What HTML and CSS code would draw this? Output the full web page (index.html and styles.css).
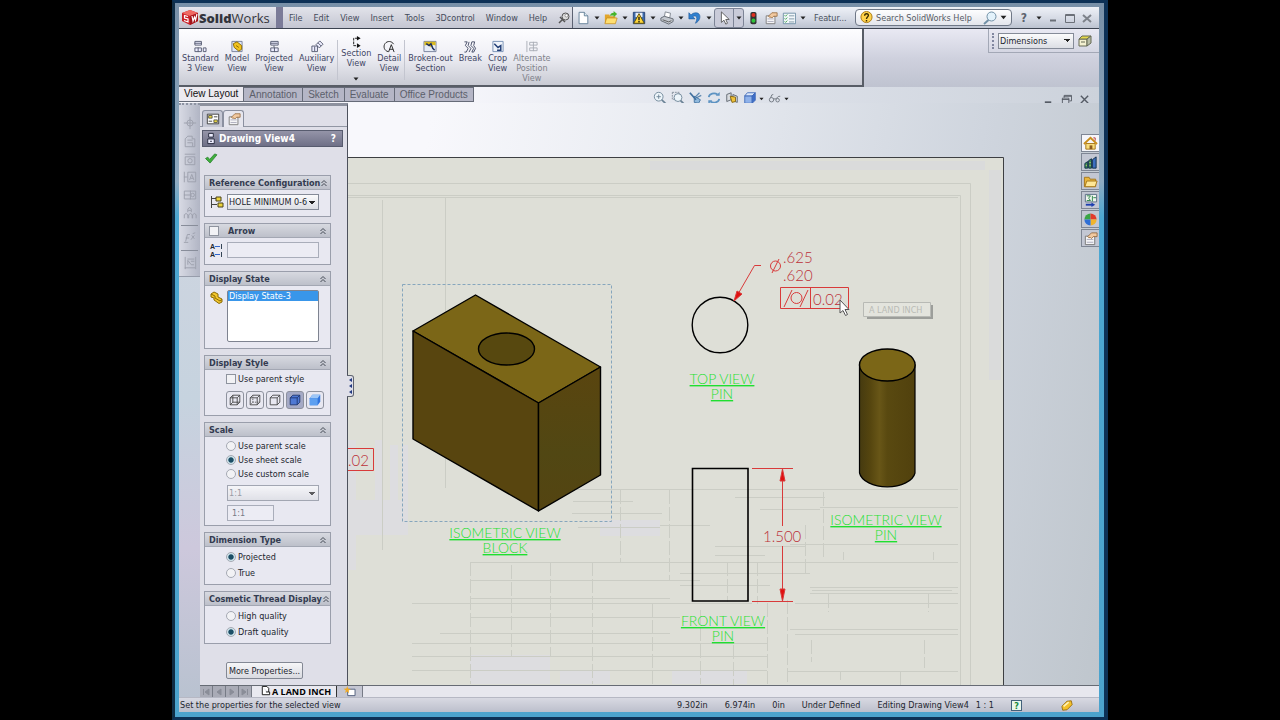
FILE: index.html
```html
<!DOCTYPE html>
<html lang="en">
<head>
  <meta charset="UTF-8">
  <title>SolidWorks - A LAND INCH</title>
  <link rel="stylesheet" href="styles.css">
</head>
<body>
<svg class="sprite" aria-hidden="true">
  <symbol id="up" viewBox="0 0 8 8"><path d="M1.5 4L4 1.5 6.5 4M1.5 7L4 4.500 6.500 7" fill="none" stroke="#444a55"/></symbol>
  <symbol id="down" viewBox="0 0 6 4"><path d="M0.500 0.500h5L3 3.500z" fill="#222"/></symbol>
  <symbol id="hand" viewBox="0 0 16 16"><path d="M2.500 5.500h10v9h-10z" fill="#f4f4f6" stroke="#777"/><path d="M4 9h7M4 12h7" stroke="#aab"/><path d="M5 6l4-4 6 0v4l-4 0-2 2-1-1-2 0z" fill="#f1c9a0" stroke="#8a5a2a" stroke-width=".8"/></symbol>
  <symbol id="cube" viewBox="0 0 16 16"><path d="M2 5.500h8.500v8.500H2z" fill="#8fb2ea" stroke="#3d68b8"/><path d="M2 5.500L5 2h9l-3.500 3.500z" fill="#dbe8fb" stroke="#3d68b8"/><path d="M14 2v8.500L10.500 14V5.500z" fill="#3f6fc9" stroke="#3d68b8"/></symbol>
</svg>

<main class="window">
  <header class="titlebar">
    <div class="brand">
      <svg width="18" height="17" viewBox="0 0 18 17"><path d="M1 4l8-3 8 3v8l-8 4-8-4z" fill="#c91f26"/><path d="M1 4l8-3 8 3-8 3z" fill="#ef6a63"/><path d="M9 7v9l8-4V4z" fill="#a5141b"/><path d="M7 7.500L3.500 6.500v2.500L7 10v3l-4-1.500M11 7l1 5 1.500-4 1 3L16 5" fill="none" stroke="#fff" stroke-width="1.200"/></svg>
      <strong>Solid</strong><span>Works</span>
    </div>
    <nav class="menu">
      <a href="#">File</a><a href="#">Edit</a><a href="#">View</a><a href="#">Insert</a><a href="#">Tools</a><a href="#">3Dcontrol</a><a href="#">Window</a><a href="#">Help</a>
      <svg width="12" height="12" viewBox="0 0 12 12"><circle cx="7.500" cy="4.500" r="3.500" fill="#ddd" stroke="#555"/><circle cx="8.500" cy="3.500" r="1.500" fill="#fff" stroke="#666" stroke-width=".6"/><path d="M1 11l4-4M2 5l5 5" stroke="#555" stroke-width="1.500"/></svg>
    </nav>
    <div class="quick">
      <button title="New"><svg viewBox="0 0 16 16"><path d="M3.500 1.500h6l4 4v9h-10z" fill="#fff" stroke="#5d7a92"/><path d="M9.500 1.500v4h4" fill="#dceaf2" stroke="#5d7a92"/></svg></button>
      <button class="drop" title="New options"><svg><use href="#down"/></svg></button>
      <button title="Open"><svg viewBox="0 0 16 16"><path d="M1 4h5l1 2h6v8H1z" fill="#e2a62b"/><path d="M3 8h12l-2 6.500H1z" fill="#ffdf70" stroke="#c18a20" stroke-width=".8"/><path d="M7 6c0-3 2-4 4-4V0l4 3.500L11 7V5C9 5 8 5 7 6z" fill="#47b52c"/></svg></button>
      <button class="drop" title="Open options"><svg><use href="#down"/></svg></button>
      <button title="Save"><svg viewBox="0 0 16 16"><path d="M1.500 1.500h13v13h-13z" fill="#3c6cae" stroke="#243f70"/><path d="M4 2h8v5H4z" fill="#e9eef6"/><path d="M8 3l6 11H2z" fill="#ffd83c" stroke="#5b4b00"/><path d="M8 6.500v4M8 11.500v1.500" stroke="#111" stroke-width="1.500"/></svg></button>
      <button class="drop" title="Save options"><svg><use href="#down"/></svg></button>
      <button title="Print"><svg viewBox="0 0 16 16"><path d="M5 7l1-6 6 1.500-1 6z" fill="#fff" stroke="#7a828c"/><path d="M1 8l4-2 10 3v3l-5 3-9-4z" fill="#c3c8cf" stroke="#5b626c"/><path d="M3 10l7 2.500 3-1.500" fill="none" stroke="#555"/></svg></button>
      <button class="drop" title="Print options"><svg><use href="#down"/></svg></button>
      <button title="Undo"><svg viewBox="0 0 16 16"><path d="M1 2v7h7L5.500 6.500C9 4 12 7 8.500 14 15 11 15.500 2 9 2 6.500 2 5 3 3.500 4.500z" fill="#2f80d0" stroke="#1a5698" stroke-width=".7"/></svg></button>
      <button class="drop" title="Undo options"><svg><use href="#down"/></svg></button>
      <span class="select">
        <button title="Select"><svg viewBox="0 0 16 16"><path d="M5 1v12l3-2.500 2 4.500 2-1-2-4.300h4z" fill="#fff" stroke="#555"/></svg></button>
        <button class="drop" title="Select options"><svg><use href="#down"/></svg></button>
      </span>
      <button title="Rebuild"><svg viewBox="0 0 16 16"><rect x="5" y="1" width="7" height="14" rx="2" fill="#333"/><circle cx="8.500" cy="4.500" r="2.300" fill="#e0301f"/><circle cx="8.500" cy="11" r="2.300" fill="#2fc33a"/></svg></button>
      <button title="Properties"><svg><use href="#hand"/></svg></button>
      <button title="Options"><svg viewBox="0 0 16 16"><path d="M1.500 2.500h14v12h-14z" fill="#f2f7fa" stroke="#6a8ba2"/><path d="M3 5l1 1 2-2M3 8.500l1 1 2-2M3 12l1 1 2-2" fill="none" stroke="#2c9b39"/><path d="M8 5.500h6M8 9h6M8 12.500h6" stroke="#7891a2"/></svg></button>
      <button class="drop" title="More"><svg><use href="#down"/></svg></button>
    </div>
    <span class="doc">Featur...</span>
    <form class="search">
      <svg width="13" height="13" viewBox="0 0 14 14"><circle cx="7" cy="6.500" r="6" fill="#ffd24a" stroke="#a87812"/><path d="M5 5c0-3 4.500-2.500 4 0C8.700 6.500 7 6.500 7 8.500M7 9.700v1.600" fill="none" stroke="#3a2c00" stroke-width="1.500"/></svg>
      <input type="text" aria-label="Search SolidWorks Help" placeholder="Search SolidWorks Help">
      <svg width="14" height="14" viewBox="0 0 14 14"><circle cx="8.500" cy="5.500" r="4.500" fill="#e3f2fb" stroke="#7190a6"/><path d="M5.500 9L1 13" stroke="#7190a6" stroke-width="2"/></svg>
      <svg width="7" height="5"><use href="#down"/></svg>
    </form>
    <div class="winbtns">
      <button title="Help">?</button>
      <button class="drop" title="Help options"><svg><use href="#down"/></svg></button>
      <button title="Minimize"><svg viewBox="0 0 12 12"><path d="M3 8.500h6" stroke="#6b7078" stroke-width="2"/></svg></button>
      <button title="Maximize"><svg viewBox="0 0 12 12"><path d="M1.500 2.500h9v8h-9zM1 3.500h10" fill="none" stroke="#6b7078"/></svg></button>
      <button title="Close"><svg viewBox="0 0 12 12"><path d="M2 3l8 7M10 3l-8 7" stroke="#7d828a" stroke-width="2"/></svg></button>
    </div>
  </header>

  <div class="commands">
    <div class="ribbon">
      <button><svg viewBox="0 0 14 14"><path d="M1.500 1.500h7v4h-7zM1.500 8.500h7v4h-7zM10.500 8.500h3v4h-3z" fill="#eef" stroke="#555b70"/><path d="M1 3.500h8M5 8v5" stroke="#555b70"/></svg>Standard<br>3 View</button>
      <button><svg viewBox="0 0 14 14"><path d="M1.500 1.500h11v11h-11z" fill="#dfe6f5" stroke="#76809c"/><path d="M3 4l4-2 5 4v4l-3 2-5-4z" fill="#f2c21d" stroke="#8a6a00"/><path d="M6 6l3 2" stroke="#8a6a00"/></svg>Model<br>View</button>
      <button><svg viewBox="0 0 14 14"><path d="M3.500 1.500h8v4h-8zM3.500 8.500h8v4h-8z" fill="#eef" stroke="#555b70"/><path d="M3 3.500h8M7.500 8v5M7 6v2" stroke="#555b70"/></svg>Projected<br>View</button>
      <button><svg viewBox="0 0 14 14"><path d="M1.500 6.500h6v6h-6zM6 5l4-4 3.500 3.500-4 4z" fill="#eef" stroke="#555b70"/><path d="M4.500 7v5M8 3l3.500 3.500" stroke="#555b70"/></svg>Auxiliary<br>View</button>
      <hr>
      <button class="tall"><svg viewBox="0 0 14 14"><path d="M9 3.500H4.500v8H9" fill="none" stroke="#111" stroke-dasharray="3 1"/><path d="M8 1l4 2.500L8 6zM8 9l4 2.500L8 14z" fill="#111"/></svg>Section<br>View<svg class="arrow"><use href="#down"/></svg></button>
      <button><svg viewBox="0 0 14 14"><path d="M12 4.500a5.500 5.500 0 1 0-6 8" fill="none" stroke="#222"/><path d="M6.500 13L9.500 5l3 8M7.500 10h4" fill="none" stroke="#222"/></svg>Detail<br>View</button>
      <hr>
      <button><svg viewBox="0 0 14 14"><path d="M.5 1.500h13v11H.5z" fill="#e7edf6" stroke="#76809c"/><path d="M1 2h12v4L10 5 8 8 5 5 1 6z" fill="#d8b91e"/><path d="M3 4l3 2 2-2 2 5 2 2" fill="none" stroke="#1a2c5e" stroke-width="1.600"/></svg>Broken-out<br>Section</button>
      <button><svg viewBox="0 0 14 14"><path d="M1 2h3l-2 4 3 3-2 4H1M6 2l-1 4 3 3-2 4M9 2L8 6l3 3-2 4M9 2h3l-1 4 2 3-2 4H9" fill="none" stroke="#444b66"/></svg>Break</button>
      <button><svg viewBox="0 0 14 14"><path d="M1.500 1.500h11v11h-11z" fill="#f0f4fb" stroke="#7690b4"/><path d="M3 4l4 4 3-2v5H6" fill="none" stroke="#233f77" stroke-width="1.600"/></svg>Crop<br>View</button>
      <button disabled><svg viewBox="0 0 14 14"><path d="M1.500 1v12M4.500 2.500h8v3h-8zM4.500 8.500h8v3h-8zM8.500 2v10" fill="none" stroke="#a9adb6"/></svg>Alternate<br>Position<br>View</button>
    </div>
    <div class="dims">
      <label for="dimstyle" class="grip" aria-label="Dimension toolbar"></label>
      <select id="dimstyle"><option>Dimensions</option></select>
      <svg width="14" height="14" viewBox="0 0 14 14"><path d="M1 5h8v7H1z" fill="#f3f0d0" stroke="#666a55"/><path d="M1 5l3-3h9L9 5z" fill="#e4d94d" stroke="#666a55"/><path d="M13 2v7l-4 3V5z" fill="#b7bca5" stroke="#666a55"/><path d="M3 8h4" stroke="#666a55"/></svg>
    </div>
  </div>

  <div class="viewbar">
    <nav class="tabs">
      <a href="#" class="active">View Layout</a><a href="#">Annotation</a><a href="#">Sketch</a><a href="#">Evaluate</a><a href="#">Office Products</a>
    </nav>
    <div class="headsup">
      <svg viewBox="0 0 16 16"><circle cx="6.500" cy="6.500" r="5" fill="#edf5fa" stroke="#6a8295"/><path d="M10 10l5 5" stroke="#6a8295" stroke-width="2"/><path d="M4 6.500h5M6.500 4v5" stroke="#6a8295"/></svg>
      <svg viewBox="0 0 16 16"><path d="M1.500 1.500h8v8h-8z" fill="none" stroke="#7b8794" stroke-dasharray="2 1"/><circle cx="8" cy="7.500" r="4.500" fill="#edf5fa" stroke="#6a8295"/><path d="M11 11l4 4" stroke="#6a8295" stroke-width="2"/></svg>
      <svg viewBox="0 0 16 16"><path d="M7 7l5-5M8 8l6-3" stroke="#5f88b0" stroke-width="1.500"/><path d="M6 6l7 4-2 4-5-1z" fill="#8fb8dc" stroke="#3f6f9e"/><path d="M1 2l7 8" stroke="#3f6f9e" stroke-width="2"/></svg>
      <svg viewBox="0 0 16 16"><path d="M2 7a6 5 0 0 1 10-3M14 9a6 5 0 0 1-10 3" fill="none" stroke="#5d93c2" stroke-width="2"/><path d="M10 5.500h4.500V1zM6 10.500H1.500V15z" fill="#5d93c2"/></svg>
      <svg viewBox="0 0 16 16"><path d="M2 4l5-2v8l-5 2zM9 4l5 2v7l-5-2z" fill="#d9dce0" stroke="#59616a"/><path d="M6 6l6 1v5l-4 1z" fill="#f0c23a" stroke="#81630e"/></svg>
      <svg viewBox="0 0 16 16"><use href="#cube"/></svg><svg class="drop"><use href="#down"/></svg>
      <svg viewBox="0 0 16 16"><path d="M3 8q1-5 3-4M9 9q3-4 5-3M6 9h3" fill="none" stroke="#6b727c"/><circle cx="4" cy="10" r="2.500" fill="none" stroke="#6b727c"/><circle cx="11" cy="10.500" r="2" fill="none" stroke="#6b727c"/></svg><svg class="drop"><use href="#down"/></svg>
    </div>
    <div class="mdi">
      <button title="Minimize document"><svg viewBox="0 0 12 12"><path d="M2 9h7" stroke="#555b65" stroke-width="2"/></svg></button>
      <button title="Restore document"><svg viewBox="0 0 12 12"><path d="M3.500 4V1.500h8v6H9M1.500 4.500h7v6h-7zM1 6h8M3 2.500h8" fill="none" stroke="#555b65"/></svg></button>
      <button title="Close document"><svg viewBox="0 0 12 12"><path d="M2 2l8 8M10 2l-8 8" stroke="#555b65" stroke-width="1.500"/></svg></button>
    </div>
  </div>

  <div class="work">
    <aside class="gutter">
      <div class="tools">
        <svg viewBox="0 0 16 16"><circle cx="8" cy="8" r="3.500"/><path d="M8 1v14M1 8h14"/></svg>
        <svg viewBox="0 0 16 16"><path d="M2.500 14.500v-9l3-3h5v3h3v9zM5 7h6M5 10h6v4"/></svg>
        <svg viewBox="0 0 16 16"><path d="M2 2.500h12M2.500 5.500h11v9h-11z"/><circle cx="8" cy="10" r="2.500"/></svg>
        <svg viewBox="0 0 16 16"><path d="M1.500 2v12M5.500 2.500h9v11h-9zM1 8h4M7.500 11.500L10 5l2.500 6.500M8.500 9.500h3"/></svg>
        <svg viewBox="0 0 16 16"><path d="M1.500 3.500h13v9h-13zM8.500 3v10M1 8h7"/><circle cx="11" cy="8" r="2"/></svg>
        <svg viewBox="0 0 16 16"><path d="M5.500 7V3.500l2-2 2 2V7M6 5h3M1.500 14v-4l2-1.500 2 1.500v4M6.500 14v-4l2-1.500 2 1.500v4M11 14v-4l2-1.500 2 1.500v4"/></svg>
        <hr>
        <svg viewBox="0 0 16 16"><path d="M3 12l2-8h3M3 8h4M9 10l4-5M10 5l3 4M1 13h5M11 3l3-1"/></svg>
        <hr>
        <svg viewBox="0 0 16 16"><path d="M2.500 1v14M14.500 1v14M2 13.500h12M5 3.500h8M5.500 10V5l4 5h3M9 6h4"/></svg>
      </div>
    </aside>

    <div class="doc-area">
      <div class="split">
        <aside class="panel">
          <div class="ptabs">
            <button title="Feature tree"><svg viewBox="0 0 16 16"><path d="M1.500 2.500h13v11h-13z" fill="#fff" stroke="#333"/><path d="M3 4h4v3H3zM9 9h4v3H9z" fill="#e8d644" stroke="#333" stroke-width=".8"/><path d="M9 5.500h4M3 10.500h4" stroke="#333"/></svg></button>
            <button title="Property manager" class="on"><svg><use href="#hand"/></svg></button>
          </div>
          <h1><svg viewBox="0 0 10 14"><path d="M2.500 1.500h5v4h-5zM1.500 7.500h7v5h-7z" fill="#eef" stroke="#222638"/><path d="M4 10h2" stroke="#222638"/></svg>Drawing View4<span>?</span></h1>
          <button class="ok" title="OK"><svg viewBox="0 0 14 12"><path d="M1 6l2.500-1.500L5.500 7 11 1l2.500 1L6 11z" fill="#3fae3c" stroke="#1f7d25" stroke-width=".8"/></svg></button>

          <section class="group">
            <h2>Reference Configuration<svg><use href="#up"/></svg></h2>
            <div class="line">
              <svg class="lead" viewBox="0 0 14 14"><path d="M1.500 1v12M2 3.500h4M2 9.500h5" stroke="#444"/><path d="M6 2h5v4H6zM8 8h5v4H8z" fill="#ecd43c" stroke="#4b431a"/></svg>
              <select aria-label="Configuration"><option>HOLE MINIMUM 0-6</option></select>
            </div>
          </section>

          <section class="group">
            <h2><label><input type="checkbox">Arrow</label><svg><use href="#up"/></svg></h2>
            <div class="line">
              <span class="lead arrows">A<i></i><br>A<i></i></span>
              <input type="text" aria-label="Arrow label">
            </div>
          </section>

          <section class="group">
            <h2>Display State<svg><use href="#up"/></svg></h2>
            <div class="line states">
              <svg class="lead" viewBox="0 0 14 14"><path d="M1 4l3-2 4 2v3l4 2v3l-3 1.500L4 10V8L1 7z" fill="#f3c72c" stroke="#8b6b06"/><path d="M1 4l4 2v2l5 3 2-1.500" fill="none" stroke="#8b6b06"/></svg>
              <select size="4" aria-label="Display State"><option selected>Display State-3</option></select>
            </div>
          </section>

          <section class="group">
            <h2>Display Style<svg><use href="#up"/></svg></h2>
            <label class="opt"><input type="checkbox">Use parent style</label>
            <div class="modes">
              <button title="Wireframe"><svg viewBox="0 0 16 16"><path d="M2.500 5.500h8v8h-8zM5.500 2.500h8v8h-8zM2.500 5.500l3-3M10.500 5.500l3-3M10.500 13.500l3-3M2.500 13.500l3-3"/></svg></button>
              <button title="Hidden lines visible"><svg viewBox="0 0 16 16"><path d="M2.500 5.500h8v8h-8zM2.500 5.500l3-3h8v8l-3 3M10.500 5.500l3-3"/><path d="M5.500 3v7.500H13M5.500 10.500l-3 3" stroke-dasharray="1 1"/></svg></button>
              <button title="Hidden lines removed"><svg viewBox="0 0 16 16"><path d="M2.500 5.500h8v8h-8zM2.500 5.500l3-3h8v8l-3 3M10.500 5.500l3-3"/></svg></button>
              <button title="Shaded with edges" class="on"><svg viewBox="0 0 16 16"><path d="M2.500 5.500h8v8h-8zM2.500 5.500l3-3h8v8l-3 3M10.500 5.500l3-3" fill="#4f79d4" stroke="#1d336e"/></svg></button>
              <button title="Shaded"><svg viewBox="0 0 16 16"><path d="M2 6l3-4h9v8l-3 4H2z" fill="#2f73dc" stroke="none"/><path d="M2 6l3-4h9l-3 4z" fill="#9cc6f7" stroke="none"/><path d="M2 6h9v8H2z" fill="#5c9ff0" stroke="none"/></svg></button>
            </div>
          </section>

          <section class="group scale">
            <h2>Scale<svg><use href="#up"/></svg></h2>
            <label class="opt"><input type="radio" name="scale">Use parent scale</label>
            <label class="opt"><input type="radio" name="scale" checked>Use sheet scale</label>
            <label class="opt"><input type="radio" name="scale">Use custom scale</label>
            <div class="ratios">
              <select disabled aria-label="Scale"><option>1:1</option></select>
              <input type="text" value="1:1" disabled aria-label="Custom scale">
            </div>
          </section>

          <section class="group wide">
            <h2>Dimension Type<svg><use href="#up"/></svg></h2>
            <label class="opt"><input type="radio" name="dim" checked>Projected</label>
            <label class="opt"><input type="radio" name="dim">True</label>
          </section>

          <section class="group wide">
            <h2>Cosmetic Thread Display<svg><use href="#up"/></svg></h2>
            <label class="opt"><input type="radio" name="thread">High quality</label>
            <label class="opt"><input type="radio" name="thread" checked>Draft quality</label>
          </section>

          <button class="more">More Properties...</button>
          <button class="handle" title="Collapse panel"><svg viewBox="0 0 6 20"><path d="M5 2v4L2 4zM5 8v4l-3-2zM5 14v4l-3-2z" fill="#223a80"/></svg></button>
        </aside>

        <div class="canvas">
          <svg class="drawing" viewBox="348 103 751 582" preserveAspectRatio="xMinYMin slice">
            <defs>
              <linearGradient id="pin">
                <stop offset="0" stop-color="#453a10"/><stop offset=".2" stop-color="#56460f"/><stop offset=".36" stop-color="#685617"/><stop offset=".5" stop-color="#594910"/><stop offset="1" stop-color="#51410d"/>
              </linearGradient>
              <linearGradient id="side" x2="0" y2="1">
                <stop offset="0" stop-color="#5a450f"/><stop offset=".6" stop-color="#514713"/><stop offset="1" stop-color="#544411"/>
              </linearGradient>
            </defs>
            <!-- sheet -->
            <path d="M340 157.500H1003.500V700H340z" fill="#dedfd7" stroke="#3d3f42"/>
            <path d="M650 161h335v9h-335z" fill="#d7d9dd" opacity=".6"/>
            <path d="M989 170h12v210h-12z" fill="#d7d8dd" opacity=".6"/>
            <g fill="#dcdce6" opacity=".6"><path d="M348 440h8v130h-8zM375 440h8v90h-8zM390 445h8v70h-8zM402 445h6v60h-6zM348 500h60v35h-60zM470 655h80v29h-80zM560 670h50v14h-50zM672 670h75v14h-75zM600 520h60v16h-60z"/></g>
            <g class="ghost">
              <path d="M348 183.500H970.500V685M348 195.500H960.500V685M348 197.500H958M445.500 198v290M382.500 200v350"/>
              <path d="M560 489.500h398M573 501.500h60M572 513.500h90M578 527.500h82M470 562.500h488M470 580.500h230M470 598.500h200M412 603.500h340M470 617.500h210M440 633.500h230M412 643.500h355M412 656.500h355M412 670.500h355M820 507.500h138M790 544.500h168M800 562.500h158M810 587.500h148M812 590.500h140M810 593.500h148M795 603.500h163M790 629.500h168M795 634.500h163M787 671.500h171M660 525.500h50M735 497.500h90M760 509.500h60M715 546.500h90M715 555.500h50M680 573.500h130M680 585.500h90"/>
              <path d="M470.500 562v122M511.500 565v92M550.500 562v95M592.500 562v122M620.500 490v72M652.500 603v81M669.500 490v90M700.500 610v74M733.500 645v40M767.500 603v81M787.500 600v85M805.500 525v50M823.500 492v65M727.500 562v40M757.500 562v42M843.500 552v8M933.500 552v8M828.500 594v18M928.500 594v18M811.500 640v22M924.500 640v28M900.500 672v13M840.500 672v8" stroke-dasharray="14 3"/>
            </g>

            <!-- block -->
            <path d="M402.500 284.500h209v237h-209z" class="bounds"/>
            <g stroke="#000" stroke-width="1.400" stroke-linejoin="round">
              <path d="M475.500 295L600.500 367 538.500 403 413 331z" fill="#7b6617"/>
              <path d="M413 331L538.500 403V511L413 439z" fill="#58450f"/>
              <path d="M538.500 403L600.500 367V475L538.500 511z" fill="url(#side)"/>
              <ellipse cx="506.500" cy="349" rx="28" ry="16" fill="#57480f"/>
            </g>
            <!-- pin -->
            <path d="M859.500 365V473A28 16 0 0 0 915 473V365z" fill="url(#pin)" stroke="#000" stroke-width="1.200"/>
            <ellipse cx="887.300" cy="365" rx="27.800" ry="16" fill="#7b6617" stroke="#000" stroke-width="1.400"/>
            <!-- top and front views -->
            <circle cx="720" cy="325" r="27.800" fill="none" stroke="#000" stroke-width="1.400"/>
            <path d="M692.500 468.500h55.500v132.500h-55.500z" fill="none" stroke="#000" stroke-width="1.600"/>

            <g class="red">
              <path d="M761 265.500h-6.500L734 301M752 468.500h41M752 601.500h41M782.500 470v56M782.500 546v54M340 448.500h33.500v22h-33.500M780.500 287.500h68v21h-68zM810.500 287.500v21"/>
              <path d="M734 301l3-10 5 3zM782.500 469l-2.500 12h5zM782.500 601l-2.500-12h5z" fill="#e01010"/>
              <circle cx="796.500" cy="298" r="5.500"/><path d="M784 307l8-17M800 307l8-17"/>
              <circle cx="775.500" cy="266" r="5"/><path d="M772 273l7-14"/>
            </g>
            <g class="size">
              <text x="783" y="263">.625</text>
              <text x="783" y="281">.620</text>
              <text x="813" y="305">0.02</text>
              <text x="763" y="542">1.500</text>
              <text x="348" y="466">.02</text>
            </g>
            <g class="name">
              <text x="505" y="538">ISOMETRIC VIEW</text><text x="505" y="553">BLOCK</text>
              <text x="722" y="384">TOP VIEW</text><text x="722" y="399">PIN</text>
              <text x="886" y="525">ISOMETRIC VIEW</text><text x="886" y="540">PIN</text>
              <text x="723" y="626">FRONT VIEW</text><text x="723" y="641">PIN</text>
            </g>
            <g>
              <path d="M867 305h66v14h-66z" fill="#9c9e9a"/>
              <path d="M863.500 302.500h67v14h-67z" fill="#e3e4dd" stroke="#b8bab5"/>
              <text x="869" y="313" class="tip">A LAND INCH</text>
            </g>
            <path d="M840 300v13l3-2.500 2.500 5 2-1-2.500-5h4z" fill="#fff" stroke="#555"/>
          </svg>

          <nav class="taskpane">
            <button class="on" title="Resources"><svg viewBox="0 0 16 16"><path d="M3 8h10v6H3z" fill="#f8dc7a" stroke="#a5761b"/><path d="M1 8.500L8 2l7 6.500" fill="none" stroke="#c88d1c" stroke-width="2"/><path d="M7 10h3v4H7z" fill="#8b5a1e"/><path d="M11 2h2v3" stroke="#b33" fill="none"/></svg></button>
            <button title="Design library"><svg viewBox="0 0 16 16"><path d="M2 9l3-2v7H2zM6 6l3-2v10H6z" fill="#3d8c57" stroke="#12304a"/><path d="M10 5l4-3v12h-4z" fill="#3d6fc0" stroke="#12304a"/><path d="M3 11h1M7 8h1M7 11h1" stroke="#f0e06a"/></svg></button>
            <button title="File explorer"><svg viewBox="0 0 16 16"><path d="M1.500 3.500h5l1 2h6v8h-12z" fill="#e9b53b" stroke="#a5761b"/><path d="M4 7.500h11l-2 6H2z" fill="#ffe796" stroke="#a5761b"/></svg></button>
            <button title="View palette"><svg viewBox="0 0 16 16"><path d="M2.500 1.500h12v8h-12z" fill="#eef4ee" stroke="#5a6d84"/><path d="M4 3h4L6 5.500 8 8H4M10 3v6M11 5h3" fill="none" stroke="#2c8548"/><path d="M3 12.500h7" stroke="#1d3fb0" stroke-width="2"/><path d="M9 10l4 2.500L9 15z" fill="#1d3fb0"/></svg></button>
            <button title="Appearances"><svg viewBox="0 0 16 16"><path d="M8 8V1.500A6.500 6.500 0 0 0 1.500 8z" fill="#3aa546"/><path d="M8 8h6.500A6.500 6.500 0 0 0 8 1.500z" fill="#e23a2c"/><path d="M8 8v6.500A6.500 6.500 0 0 0 14.500 8z" fill="#efb42c"/><path d="M8 8H1.500A6.500 6.500 0 0 0 8 14.500z" fill="#2f6fd6"/></svg></button>
            <button title="Custom properties"><svg><use href="#hand"/></svg></button>
          </nav>
        </div>
      </div>

      <div class="sheets">
        <button title="First"><svg viewBox="0 0 10 10"><path d="M2.500 2v6M8 2v6L4 5z"/></svg></button><button title="Previous"><svg viewBox="0 0 10 10"><path d="M7 2v6L3 5z"/></svg></button><button title="Next"><svg viewBox="0 0 10 10"><path d="M3 2v6l4-3z"/></svg></button><button title="Last"><svg viewBox="0 0 10 10"><path d="M7.500 2v6M2 2v6l4-3z"/></svg></button>
        <a href="#"><svg viewBox="0 0 12 12"><path d="M2.500.5h5l2 2v4M2.500.5v9h8v-3h-4" fill="#fff" stroke="#111"/></svg>A LAND INCH</a>
        <button class="add" title="Add sheet"><svg viewBox="0 0 14 12"><path d="M4.500 3.500h8v7h-8z" fill="#fff" stroke="#4c5a78"/><path d="M4 0l1 3 3 .5L5.500 5 6 8 4 6 1.500 7.500 2.500 5 0 3l3-.3z" fill="#f1ab26" stroke="none"/></svg></button>
      </div>
    </div>
  </div>

  <footer class="status">
    <span class="msg">Set the properties for the selected view</span>
    <span>9.302in</span><span>6.974in</span><span>0in</span><span>Under Defined</span><span>Editing Drawing View4</span><span class="ratio">1 : 1</span>
    <b>?</b>
    <svg class="tag" viewBox="0 0 14 12"><path d="M1 7l6-6 5-.5L13 5l-6 6-5 .5z" fill="#f4c12a" stroke="#94690d"/><path d="M3 7l6-5" stroke="#fff2b5" stroke-width="2"/></svg>
  </footer>
</main>
</body>
</html>
```

FILE: styles.css
```css
* {
  box-sizing: border-box;
}

body {
  margin: 0;
  padding: 0 172px;
  background: #000;
  color: #22252e;
  font: 9px/10px "DejaVu Sans Condensed", "Open Sans", sans-serif;
}

button, input, select {
  margin: 0;
  padding: 0;
  border: 0;
  background: none;
  color: inherit;
  font: inherit;
}

a {
  color: inherit;
  text-decoration: none;
}

svg {
  display: block;
  flex: none;
}

hr {
  margin: 0;
  border: 0;
}

.sprite {
  display: none;
}

.window {
  display: flex;
  flex-direction: column;
  min-height: 100vh;
  padding: 4px 5px 5px 4px;
  border: solid #0d3156;
  border-width: 3px 4px 3px 3px;
  border-left-color: #0f2c44;
  background: linear-gradient(#7890a8, #8fabc2 25%, #4ca7d2 30%, #4ca3cd);
}

/* title bar */
.titlebar {
  display: flex;
  align-items: center;
  height: 22px;
  border-bottom: 1px solid #3c4350;
  background: linear-gradient(#eef1f7, #d3d8e3 60%, #bcc3d0);
}

.brand {
  display: flex;
  align-items: center;
  align-self: stretch;
  width: 104px;
  padding-left: 2px;
  border-right: 7px solid #7b7b98;
  background: linear-gradient(#e8e8ef, #bfc0cc);
  color: #33343c;
  font: 13px "Open Sans", sans-serif;
}

.brand strong {
  font-weight: 800;
}

.menu {
  display: flex;
  align-items: center;
  align-self: stretch;
  gap: 11px;
  width: 290px;
  padding-left: 6px;
  border-right: 1px solid #5c6272;
  background: linear-gradient(#e2e3ea, #c4c6d2);
  color: #444b5a;
}

.quick {
  display: flex;
  align-items: center;
  padding-left: 1px;
}

.quick button {
  width: 18px;
  height: 18px;
  padding: 2px;
}

.quick button svg {
  width: 14px;
  height: 14px;
}

.quick .drop, .winbtns .drop {
  width: 10px;
  padding: 0 2px;
}

.quick .drop svg, .winbtns .drop svg {
  width: 6px;
  height: 4px;
}

.select {
  display: flex;
  border: 1px solid #7d8496;
  border-radius: 3px;
  background: #c9cbd9;
}

.select .drop {
  border-left: 1px solid #7d8496;
}

.doc {
  flex: 1;
  padding-left: 6px;
  color: #4b5260;
}

.search {
  display: flex;
  align-items: center;
  gap: 3px;
  width: 157px;
  height: 17px;
  padding: 0 4px;
  border: 1px solid #6f7887;
  border-radius: 4px;
  background: linear-gradient(#fdfdfe, #e3e6ec);
}

.search input {
  flex: 1;
  min-width: 0;
}

.search input::placeholder {
  color: #565b65;
  opacity: 1;
}

.winbtns {
  display: flex;
  align-items: center;
  gap: 3px;
  padding: 0 4px 0 5px;
}

.winbtns button {
  width: 14px;
  color: #5d636e;
  font-size: 12px;
  font-weight: bold;
}

.winbtns svg {
  width: 12px;
  height: 12px;
}

/* command manager */
.commands {
  display: flex;
  justify-content: space-between;
  align-items: flex-start;
  height: 58px;
  background: linear-gradient(#e9e9f3, #cfd1de 50%, #bfc3d0);
}

.ribbon {
  display: flex;
  gap: 6px;
  width: 685px;
  height: 58px;
  padding: 11px 3px 0;
  border: solid #585d66;
  border-width: 0 2px 2px 0;
  background: linear-gradient(#fdfdff, #f0f0f6 45%, #c9cbd4);
  color: #3f4664;
}

.ribbon button {
  display: flex;
  flex-direction: column;
  align-items: center;
  white-space: nowrap;
}

.ribbon button > svg {
  width: 14px;
  height: 13px;
}

.ribbon button:disabled {
  color: #7f828a;
}

.ribbon .tall {
  margin-top: -5px;
}

.ribbon .tall .arrow {
  width: 6px;
  height: 4px;
  margin-top: 9px;
}

.ribbon hr {
  width: 1px;
  height: 40px;
  margin: 0 -3px;
  background: #c3c5cf;
}

.dims {
  display: flex;
  align-items: center;
  gap: 4px;
  width: 111px;
  height: 24px;
  padding: 0 7px 0 3px;
  border: solid #a3a8b6;
  border-width: 0 0 1px 1px;
}

.grip {
  width: 2px;
  height: 16px;
  border-left: 2px dotted #8187a0;
}

.dims select {
  flex: 1;
  height: 16px;
}

select:not([size]) {
  appearance: none;
  padding: 0 1px;
  border: 1px solid #858b98;
  background: conic-gradient(from -45deg at 50% 100%, #222 90deg, transparent 0) calc(100% - 3px) 50% / 6px 3px no-repeat, linear-gradient(#fbfbfc, #dcdee4);
}

/* tabs and view toolbar */
.viewbar {
  display: flex;
  height: 16px;
  background: linear-gradient(90deg, #f6f6fb 30%, #dfe3eb 60%, #ccd2db);
}

.tabs {
  display: flex;
  height: 15px;
  color: #5c5f6b;
  font: 10px/13px "Liberation Sans", sans-serif;
}

.tabs a {
  padding: 0 5px;
  border: solid #666b78;
  border-width: 1px 1px 1px 0;
  background: #b5b6c6;
}

.tabs .active {
  border-top: 0;
  background: #eceaf0;
  color: #111;
}

.headsup {
  display: flex;
  gap: 4px;
  height: 14px;
  margin: 4px auto 0 179px;
}

.headsup svg {
  width: 14px;
  height: 14px;
}

.headsup .drop {
  width: 5px;
  height: 4px;
  margin: 6px 0 0 -2px;
}

.mdi {
  display: flex;
  gap: 7px;
  height: 12px;
  margin: 6px 9px 0 0;
}

.mdi svg {
  width: 11px;
  height: 11px;
}

/* work area */
.work {
  display: flex;
  flex: 1;
}

.gutter {
  width: 21px;
  background: linear-gradient(#d4d6e0, #c6d3df 50%, #cdc8dc 75%, #b9c2d0);
}

.tools {
  display: flex;
  flex-direction: column;
  align-items: center;
  gap: 4px;
  height: 174px;
  padding-top: 11px;
  border-top: 2px dotted #8d93a2;
  border-bottom: 1px solid #979dab;
  background: linear-gradient(90deg, #d8dae4, #b1b5c4);
}

.tools svg {
  width: 14px;
  height: 14px;
  fill: none;
  stroke: #9a9eaa;
}

.tools hr {
  width: 17px;
  height: 1px;
  margin: 1px 0;
  background: #888d9a;
}

.doc-area {
  display: flex;
  flex: 1;
  flex-direction: column;
}

.split {
  display: flex;
  flex: 1;
}

.panel {
  position: relative;
  width: 148px;
  border-top: 3px solid #8d919e;
  border-right: 1px solid #4d515c;
  background: #dfdfe8;
}

.ptabs {
  display: flex;
  height: 21px;
  padding: 4px 0 0 2px;
  border-bottom: 1px solid #9196a3;
}

.ptabs button {
  width: 21px;
  height: 17px;
  padding: 1px 3px;
  border: 1px solid #8b90a0;
  border-bottom: 0;
  border-radius: 3px 3px 0 0;
  background: #c6c8d5;
}

.ptabs .on {
  background: #e6e6ee;
}

.ptabs svg {
  width: 14px;
  height: 14px;
}

.panel h1 {
  display: flex;
  align-items: center;
  gap: 3px;
  height: 17px;
  margin: 3px 4px 0 2px;
  padding: 0 6px 0 3px;
  border: 1px solid #575b6e;
  background: linear-gradient(#9494a8, #6f7087);
  color: #fff;
  font-size: 10px;
  font-weight: bold;
}

.panel h1 svg {
  width: 10px;
  height: 13px;
}

.panel h1 span {
  margin-left: auto;
}

.ok {
  display: block;
  margin: 6px 0 11px 4px;
}

.ok svg {
  width: 14px;
  height: 11px;
}

.group {
  width: 127px;
  margin: 0 0 6px 4px;
  padding-bottom: 6px;
  border: 1px solid #9a9eab;
  background: #e8e8f1;
}

.group h2 {
  display: flex;
  align-items: center;
  justify-content: space-between;
  height: 14px;
  margin: 0 0 2px;
  padding: 0 3px 0 4px;
  border-bottom: 1px solid #a3a7b3;
  background: linear-gradient(#d7d9e0, #bdc0ca);
  color: #333b50;
  font-size: 9px;
  font-weight: bold;
  white-space: nowrap;
}

.group h2 svg {
  width: 8px;
  height: 8px;
}

.group h2 label {
  display: flex;
  align-items: center;
  gap: 9px;
}

.line {
  display: flex;
  align-items: center;
  gap: 3px;
  padding: 2px 0 0 5px;
}

.lead {
  width: 14px;
  height: 14px;
}

.arrows {
  font: bold 7px/8px "Liberation Sans", sans-serif;
  white-space: nowrap;
}

.arrows i {
  display: inline-block;
  width: 7px;
  height: 5px;
  border-right: 1px solid #345;
  background: linear-gradient(#36c, #36c) 0 50% / 5px 1px no-repeat;
}

.line select, .line input {
  width: 92px;
  height: 16px;
}

.group input[type="text"] {
  border: 1px solid #a9adba;
  background: #ececf4;
}

.line.states {
  align-items: flex-start;
}

.states select {
  height: 52px;
  overflow: hidden;
  border: 1px solid #7e8390;
  background: #fff;
}

.states option {
  min-height: 10px;
  padding: 0 1px;
  background: #3996ea linear-gradient(#3996ea, #3996ea);
  color: #fff;
}

.opt {
  display: flex;
  align-items: center;
  gap: 2px;
  height: 14px;
  padding-left: 21px;
}

input[type="checkbox"], input[type="radio"] {
  appearance: none;
  width: 10px;
  height: 10px;
  border: 1px solid #8e939e;
  background: #f2f2f5;
}

input[type="radio"] {
  border-radius: 50%;
  border-color: #a5a9b3;
}

input[type="radio"]:checked {
  background: radial-gradient(#1c4e66 40%, #cfe4ec 55%);
}

.modes {
  display: flex;
  gap: 2px;
  padding: 5px 0 0 21px;
}

.modes button {
  width: 18px;
  height: 18px;
  padding: 1px;
  border: 1px solid #8e929e;
  border-radius: 3px;
}

.modes svg {
  width: 14px;
  height: 14px;
  fill: none;
  stroke: #444;
}

.modes .on {
  background: #a5aac6;
}

.ratios {
  display: flex;
  flex-direction: column;
  gap: 4px;
  padding: 4px 0 0 22px;
  color: #777b84;
}

.ratios select {
  width: 92px;
  height: 16px;
  opacity: .7;
}

.ratios input {
  width: 47px;
  height: 16px;
  padding-left: 4px;
}

.scale {
  padding-bottom: 4px;
}

.wide {
  padding-bottom: 3px;
}

.wide .opt {
  height: 16px;
}

.more {
  width: 77px;
  height: 17px;
  margin: 12px 0 5px 26px;
  border: 1px solid #838894;
  border-radius: 2px;
  background: linear-gradient(#f6f6f8, #d9dae0);
  white-space: nowrap;
}

.handle {
  position: absolute;
  top: 269px;
  right: -7px;
  z-index: 1;
  width: 7px;
  height: 22px;
  border: 1px solid #5f6470;
  border-left: 0;
  border-radius: 0 3px 3px 0;
  background: #dfdfe8;
}

.handle svg {
  width: 6px;
  height: 20px;
}

.canvas {
  position: relative;
  flex: 1;
  background: linear-gradient(100deg, #f8f8fc 10%, #e8ebf1 40%, #cfd5de 75%, #bfc6cd);
}

.drawing {
  position: absolute;
  width: 100%;
  height: 100%;
}

.ghost {
  fill: none;
  stroke: #cbcdc5;
}

.bounds {
  fill: none;
  stroke: #86a6bd;
  stroke-dasharray: 3 2;
}

.red {
  fill: none;
  stroke: #d83a3a;
}

.size {
  fill: #bb2f38;
  font: 300 15px Lato, sans-serif;
}

.name {
  fill: #1fdf30;
  font: 300 14px Lato, sans-serif;
  text-anchor: middle;
  text-decoration: underline;
}

.tip {
  fill: #b9bbb5;
  font-size: 9px;
}

.taskpane {
  position: absolute;
  top: 31px;
  right: 0;
  display: flex;
  flex-direction: column;
  gap: 1px;
}

.taskpane button {
  width: 18px;
  height: 18px;
  padding: 1px;
  border: 1px solid #7f8694;
  border-right: 0;
  background: #c3c7d3;
}

.taskpane .on {
  background: #f6f6fa;
}

.taskpane svg {
  width: 15px;
  height: 15px;
}

/* sheet tabs */
.sheets {
  display: flex;
  height: 12px;
  border-top: 1px solid #666b74;
  background: #e7e7ee;
}

.sheets button {
  width: 13px;
  border-right: 1px solid #777b86;
  background: #a9abb6;
}

.sheets button svg {
  width: 10px;
  height: 10px;
  margin: auto;
  fill: #8a8d98;
  stroke: #8a8d98;
}

.sheets a {
  display: flex;
  align-items: center;
  gap: 1px;
  padding: 0 5px 0 8px;
  border-right: 1px solid #333;
  background: #e9e9f0;
  color: #000;
  font: bold 9px/11px "Open Sans", sans-serif;
  white-space: nowrap;
}

.sheets a svg {
  width: 11px;
  height: 11px;
}

.sheets .add {
  width: 26px;
  background: #c4c6d2;
}

.sheets .add svg {
  width: 14px;
  height: 11px;
}

/* status bar */
.status {
  display: flex;
  align-items: center;
  gap: 17px;
  height: 15px;
  padding: 0 26px 0 1px;
  border-top: 1px solid #b6b8c4;
  background: linear-gradient(#d8d9e2, #bcbfcc);
}

.status .msg {
  flex: 1;
}

.status .ratio {
  margin-left: -10px;
}

.status b {
  width: 11px;
  height: 11px;
  margin-right: 22px;
  border: 1px solid #43617b;
  background: #e9f7ec;
  color: #16883c;
  text-align: center;
}

.tag {
  width: 12px;
  height: 11px;
}
```
